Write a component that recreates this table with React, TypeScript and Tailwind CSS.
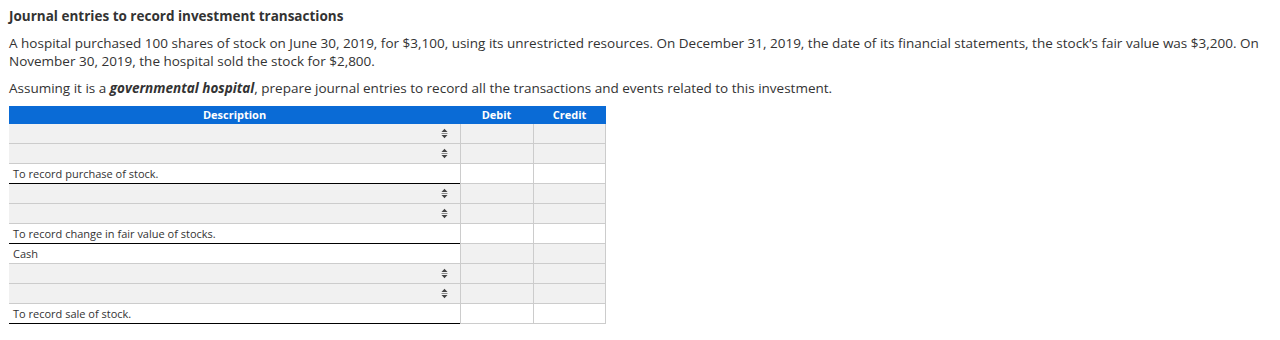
import React from 'react'

type Row = {
  kind: 'select' | 'note' | 'text'
  label?: string
  amountsWhite?: boolean
}

const rows: Row[] = [
  { kind: 'select' },
  { kind: 'select' },
  { kind: 'note', label: 'To record purchase of stock.', amountsWhite: true },
  { kind: 'select' },
  { kind: 'select' },
  { kind: 'note', label: 'To record change in fair value of stocks.', amountsWhite: true },
  { kind: 'text', label: 'Cash' },
  { kind: 'select' },
  { kind: 'select' },
  { kind: 'note', label: 'To record sale of stock.', amountsWhite: true },
]

const SelectArrows = () => (
  <svg width="7" height="11" viewBox="0 0 7 11" className="text-[#444]">
    <polygon points="0.5,4 3.5,0.8 6.5,4" fill="currentColor" />
    <rect x="0.5" y="5" width="6" height="1" fill="currentColor" opacity="0.6" />
    <polygon points="0.5,7 3.5,10.2 6.5,7" fill="currentColor" />
  </svg>
)

const App = () => {
  return (
    <div className="bg-white w-[1280px] h-[340px] px-[9px] pt-[6px] text-[#333] font-['Open_Sans',sans-serif]">
      <h1 className="text-[13.5px] leading-[20px] font-bold">
        Journal entries to record investment transactions
      </h1>
      <p className="mt-[8px] text-[13.5px] leading-[18px]">
        A hospital purchased 100 shares of stock on June 30, 2019, for $3,100, using its unrestricted resources. On December 31, 2019, the date of its financial statements, the stock’s fair value was $3,200. On November 30, 2019, the hospital sold the stock for $2,800.
      </p>
      <p className="mt-[9px] text-[13.5px] leading-[18px]">
        Assuming it is a <b><i>governmental hospital</i></b>, prepare journal entries to record all the transactions and events related to this investment.
      </p>

      <div className="mt-[9px] w-[597px]">
        <div className="flex h-[18px] bg-[#0a6bd6] text-white text-[11px] font-bold leading-[18px]">
          <div className="w-[451px] text-center">Description</div>
          <div className="w-[73px] text-center">Debit</div>
          <div className="w-[73px] text-center">Credit</div>
        </div>
        {rows.map((r, i) => (
          <div key={i} className="flex h-[20px]">
            {r.kind === 'select' && (
              <div className="w-[451px] bg-[#f1f1f1] border-b border-[#cccccc] flex items-center justify-end pr-[12px]">
                <SelectArrows />
              </div>
            )}
            {r.kind === 'note' && (
              <div className="w-[451px] bg-white border-b border-black pl-[4px] text-[11px] leading-[19px] whitespace-nowrap">
                {r.label}
              </div>
            )}
            {r.kind === 'text' && (
              <div className="w-[451px] bg-white border-b border-[#cccccc] pl-[4px] text-[11px] leading-[19px]">
                {r.label}
              </div>
            )}
            <div
              className={`w-[73px] border-l border-b border-[#cccccc] ${r.amountsWhite ? 'bg-white' : 'bg-[#f1f1f1]'}`}
            />
            <div
              className={`w-[73px] border-l border-r border-b border-[#cccccc] ${r.amountsWhite ? 'bg-white' : 'bg-[#f1f1f1]'}`}
            />
          </div>
        ))}
      </div>
    </div>
  )
}

export default App
